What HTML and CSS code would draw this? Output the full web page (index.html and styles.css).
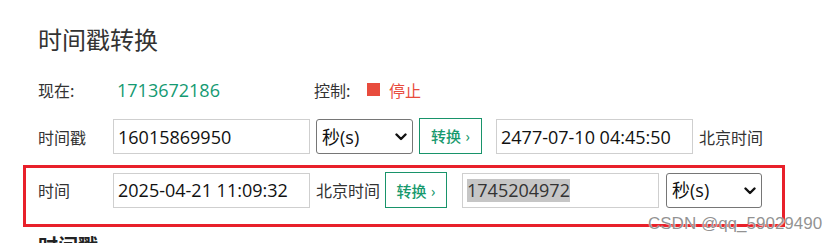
FILE: index.html
```html
<!DOCTYPE html>
<html lang="zh-CN">
<head>
<meta charset="utf-8">
<title>时间戳转换</title>
<link rel="stylesheet" href="styles.css">
</head>
<body>
<div class="page">
  <h2 class="title">时间戳转换</h2>

  <div class="row now-row">
    <span class="label">现在:</span>
    <span class="now-value">1713672186</span>
    <span class="ctrl-label">控制:</span>
    <span class="stop-square"></span>
    <span class="stop-text">停止</span>
  </div>

  <div class="row form-row">
    <span class="label">时间戳</span>
    <input class="field" type="text" value="16015869950">
    <div class="select-wrap">
      <select class="unit-select"><option>秒(s)</option><option>毫秒(ms)</option></select>
      <svg class="chev" width="12" height="8" viewBox="0 0 12 8"><path d="M1.5 1.5 L6 6 L10.5 1.5" fill="none" stroke="#111" stroke-width="2.4" stroke-linecap="round" stroke-linejoin="round"/></svg>
    </div>
    <button class="convert-btn">转换 <span class="arrow">›</span></button>
    <input class="field field-result" type="text" value="2477-07-10 04:45:50">
    <span class="tz">北京时间</span>
  </div>

  <div class="row form-row highlight-row">
    <span class="label">时间</span>
    <input class="field" type="text" value="2025-04-21 11:09:32">
    <span class="tz tz-inline">北京时间</span>
    <button class="convert-btn convert-btn-2">转换 <span class="arrow">›</span></button>
    <div class="field field-out"><span class="selected">1745204972</span></div>
    <div class="select-wrap select-wrap-2">
      <select class="unit-select"><option>秒(s)</option><option>毫秒(ms)</option></select>
      <svg class="chev" width="12" height="8" viewBox="0 0 12 8"><path d="M1.5 1.5 L6 6 L10.5 1.5" fill="none" stroke="#111" stroke-width="2.4" stroke-linecap="round" stroke-linejoin="round"/></svg>
    </div>
  </div>

  <h3 class="sub-title">时间戳</h3>
</div>
<div class="watermark">CSDN @qq_59029490</div>
</body>
</html>
```

FILE: styles.css
```css
* { box-sizing: border-box; }
html, body { margin: 0; padding: 0; background: #fff; overflow: hidden; }
body {
  font-family: "Noto Sans CJK SC", "Noto Sans", sans-serif;
  color: #333;
  width: 833px;
  height: 243px;
  position: relative;
}
.page { padding-left: 23px; }
.title {
  margin: 27px 0 21px 15px;
  font-size: 24px;
  line-height: 24px;
  font-weight: 400;
  color: #333;
}
.row {
  display: flex;
  align-items: center;
  padding-left: 15px;
  height: 35px;
  font-size: 16px;
}
.label { width: 75px; flex: none; color: #333; }
.now-row { margin-bottom: 12px; }
.now-value {
  width: 201px;
  padding-left: 4px;
  color: #149a72;
  font-family: "Open Sans", "Noto Sans CJK SC", sans-serif;
  font-size: 18px;
}
.ctrl-label { width: 53px; color: #333; }
.stop-square {
  width: 13px;
  height: 13px;
  background: #e84c3d;
  margin-right: 9px;
}
.stop-text { color: #e84c3d; }

.field {
  width: 197px;
  height: 35px;
  border: 1px solid #cfcfcf;
  padding: 0 4px;
  font-family: "Open Sans", "Noto Sans CJK SC", sans-serif;
  font-size: 18px;
  color: #111;
  background: #fff;
  outline: none;
  flex: none;
}
.select-wrap {
  position: relative;
  width: 97px;
  height: 35px;
  margin-left: 6px;
  flex: none;
}
.unit-select {
  appearance: none;
  -webkit-appearance: none;
  width: 100%;
  height: 100%;
  border: 1px solid #767676;
  border-radius: 3px;
  background: #fff;
  padding: 0 5px;
  font-family: "Open Sans", "Noto Sans CJK SC", sans-serif;
  font-size: 18px;
  color: #111;
}
.chev {
  position: absolute;
  right: 6px;
  top: 14px;
  pointer-events: none;
}
.convert-btn {
  width: 63px;
  height: 36px;
  margin-left: 6px;
  margin-top: -2px;
  border: 1px solid #18936a;
  background: #fff;
  color: #17996d;
  font-family: "Noto Sans CJK SC", "Noto Sans", sans-serif;
  font-size: 15px;
  font-weight: 500;
  padding: 0;
  flex: none;
}
.arrow { font-size: 15px; margin-left: 1px; }
.field-result { margin-left: 14px; }
.tz { margin-left: 6px; color: #333; }

.form-row { margin-bottom: 11px; }
.highlight-row {
  width: 762px;
  height: auto;
  border: 3px solid #e8202a;
  padding: 4px 0 16px 12px;
  margin-bottom: 0;
}
.tz-inline { margin-left: 6px; }
.convert-btn-2 { width: 62px; margin-left: 5px; margin-top: 0; }
.field-out {
  margin-left: 15px;
  display: flex;
  align-items: center;
}
.selected { background: #c6c6c6; color: #333; line-height: 23px; }
.select-wrap-2 { width: 96px; margin-left: 7px; }

.sub-title {
  margin: 9px 0 0 15px;
  font-size: 20px;
  line-height: 20px;
  font-weight: 700;
  color: #222;
}
.watermark {
  position: absolute;
  left: 648px;
  top: 214px;
  font-family: "Liberation Sans", Arial, sans-serif;
  font-size: 17px;
  color: rgba(110, 110, 110, 0.75);
  text-shadow: 0 0 1px #fff, 1px 1px 0 rgba(255,255,255,0.6);
  white-space: nowrap;
}
```
